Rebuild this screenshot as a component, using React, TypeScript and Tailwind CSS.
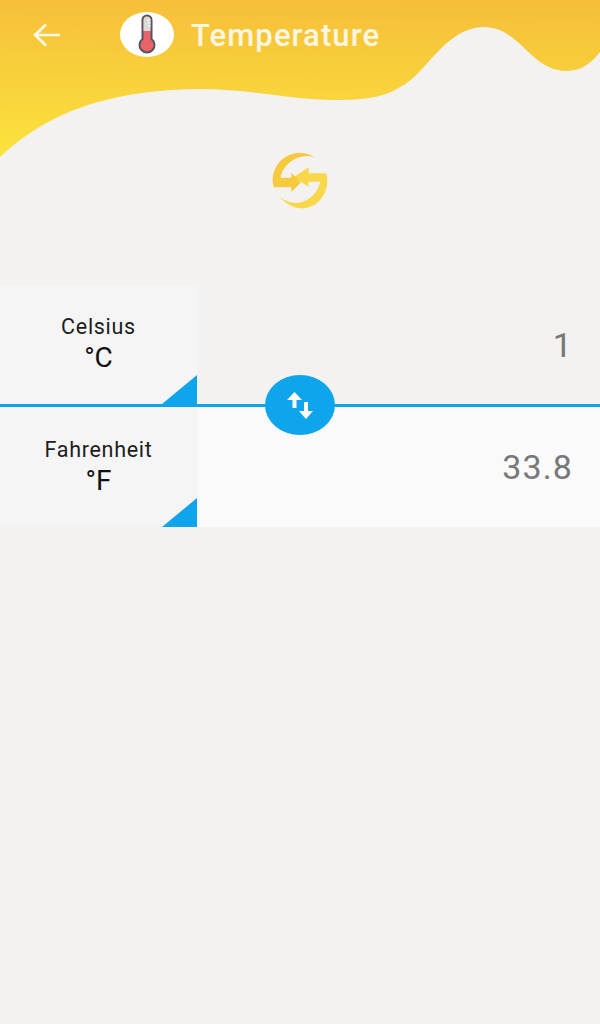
// Верхняя волна с градиентом
function Wave() {
  return (
    <svg className="absolute left-0 top-0" width="600" height="160" viewBox="0 0 600 160">
      <defs>
        <linearGradient id="wave" x1="0.08" y1="1" x2="0.12" y2="0">
          <stop offset="0" stopColor="#fbe33c" />
          <stop offset="1" stopColor="#f6bf3a" />
        </linearGradient>
      </defs>
      <path
        d="M0 0H600V52C592 62 582 71 567 71C530 71 520 27 484 27C445 27 425 76 400 87C385 97 365 100 335 100C290 100 250 89 200 89C95 90 40 120 0 157Z"
        fill="url(#wave)"
      />
    </svg>
  );
}

function BackArrow() {
  return (
    <svg width="28" height="24" viewBox="0 0 28 24" fill="none" stroke="#fdf8e8" strokeWidth="2.6">
      <path d="M27 12H2M13 1.500L2 12L13 22.500" />
    </svg>
  );
}

function ThermometerIcon() {
  return (
    <svg width="54" height="46" viewBox="0 0 54 46">
      <ellipse cx="27" cy="22.500" rx="27" ry="22.500" fill="#ffffff" />
      <path
        d="M22.500 8A4.500 4.500 0 0 1 31.500 8V27A7.500 7.500 0 1 1 22.500 27Z"
        fill="#e8636a"
        stroke="#55555a"
        strokeWidth="2"
      />
      <path d="M23.500 8A3.500 3.500 0 0 1 30.500 8V19H23.500Z" fill="#d9d9d6" />
      <path d="M27.500 8h3M27.500 11h3M27.500 14h3" stroke="#ffffff" strokeWidth="1" />
    </svg>
  );
}

function ConvertLogo() {
  return (
    <svg width="60" height="60" viewBox="60 30 180 180">
      {/* нижняя дуга со стрелкой */}
      <path
        d="M82 165C105 190 130 205 155 205C200 205 232 165 232 122C232 112 230 105 228 100H176V82L130 112L176 140V125H210C205 160 170 192 130 188C112 186 95 178 82 165Z"
        fill="#f8d84a"
      />
      {/* верхняя дуга со стрелкой */}
      <path
        d="M218 72C195 48 172 38 150 38C100 38 68 80 68 122C68 130 70 136 72 142H124V156L152 128L124 98V113H92C96 80 130 50 170 48C190 47 205 58 218 72Z"
        fill="#f6c93e"
      />
    </svg>
  );
}

function SwapIcon() {
  return (
    <svg width="26" height="27" viewBox="0 0 26 27" fill="#ffffff">
      <path d="M7.500 0L15 8H9.500V16H5.500V8H0Z" />
      <path d="M19 27L12 19H17V10H21V19H26Z" />
    </svg>
  );
}

function Corner() {
  return (
    <svg className="absolute bottom-0 right-0" width="35" height="29" viewBox="0 0 35 29">
      <path d="M35 0V29H0Z" fill="#0ea5ec" />
    </svg>
  );
}

type UnitRowProps = {
  name: string;
  symbol: string;
  value: string;
  rowClass: string;
  rightClass: string;
  labelClass: string;
};

function UnitRow({ name, symbol, value, rowClass, rightClass, labelClass }: UnitRowProps) {
  return (
    <div className={`flex ${rowClass}`}>
      <div className={`relative flex w-[197px] flex-col items-center bg-[#f5f5f5] ${labelClass}`}>
        <span className="text-[21.500px] leading-[26px] tracking-[0.7px] text-[#1c1c1c]">{name}</span>
        <span className="mt-[2px] text-[28px] leading-[32px] text-[#111111]">{symbol}</span>
        <Corner />
      </div>
      <div className={`flex flex-1 items-center justify-end pr-[27px] text-[34px] tracking-[1.1px] text-[#787878] ${rightClass}`}>
        {value}
      </div>
    </div>
  );
}

export default function App() {
  return (
    <div className="relative h-[1024px] w-[600px] overflow-hidden bg-[#f3f2f0] font-['Roboto',sans-serif]">
      <Wave />

      {/* Шапка */}
      <header className="relative flex h-[70px] items-center pl-[33px]">
        <BackArrow />
        <div className="ml-[59px]">
          <ThermometerIcon />
        </div>
        <h1 className="ml-[17px] mt-[3px] text-[31px] font-medium tracking-[1.1px] text-[#fdf6e0]">Temperature</h1>
      </header>

      <div className="relative mt-[80px] flex justify-center">
        <ConvertLogo />
      </div>

      {/* Конвертер */}
      <div className="relative mt-[76px]">
        <UnitRow
          name="Celsius"
          symbol="°C"
          value="1"
          rowClass="h-[118px]"
          rightClass=""
          labelClass="pt-[28px]"
        />
        <div className="h-[3px] bg-[#0ea5ec]" />
        <UnitRow
          name="Fahrenheit"
          symbol="°F"
          value="33.8"
          rowClass="h-[120px]"
          rightClass="bg-[#fafafa]"
          labelClass="pt-[30px]"
        />
        <div className="absolute left-[265px] top-[89px] flex h-[60px] w-[70px] items-center justify-center rounded-[50%] bg-[#0ea5ec]">
          <SwapIcon />
        </div>
      </div>
    </div>
  );
}
